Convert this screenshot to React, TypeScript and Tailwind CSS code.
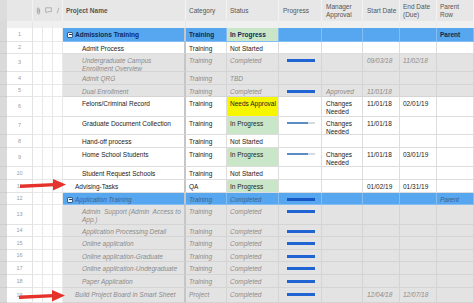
import React from 'react';

type Kind = 'parent' | 'parentDone' | 'normal' | 'done';

interface SheetRow {
    n: number;
    h: string;
    kind: Kind;
    level: 0 | 1 | 2;
    name: string[];
    cat: string;
    status: string;
    prog?: number;
    mgr?: string[];
    start?: string;
    end?: string;
    parent?: string;
}

const COLS = 'grid grid-cols-[7px_26px_10px_10px_10px_123px_41px_52px_43px_41px_37px_37px_37px]';

const rows: SheetRow[] = [
    { n: 1, h: 'h-[14px]', kind: 'parent', level: 0, name: ['Admissions Training'], cat: 'Training', status: 'In Progress', parent: 'Parent' },
    { n: 2, h: 'h-[12px]', kind: 'normal', level: 2, name: ['Admit Process'], cat: 'Training', status: 'Not Started' },
    { n: 3, h: 'h-[18px]', kind: 'done', level: 2, name: ['Undergraduate Campus', 'Enrollment Overview'], cat: 'Training', status: 'Completed', prog: 1, start: '09/03/18', end: '11/02/18' },
    { n: 4, h: 'h-[13px]', kind: 'done', level: 2, name: ['Admit QRG'], cat: 'Training', status: 'TBD' },
    { n: 5, h: 'h-[12px]', kind: 'done', level: 2, name: ['Dual Enrollment'], cat: 'Training', status: 'Completed', prog: 1, mgr: ['Approved'], start: '11/01/18' },
    { n: 6, h: 'h-[20px]', kind: 'normal', level: 2, name: ['Felons/Criminal Record'], cat: 'Training', status: 'Needs Approval', mgr: ['Changes', 'Needed'], start: '11/01/18', end: '02/01/19' },
    { n: 7, h: 'h-[18px]', kind: 'normal', level: 2, name: ['Graduate Document Collection'], cat: 'Training', status: 'In Progress', prog: 0.75, mgr: ['Changes', 'Needed'], start: '11/01/18' },
    { n: 8, h: 'h-[13px]', kind: 'normal', level: 2, name: ['Hand-off process'], cat: 'Training', status: 'Not Started' },
    { n: 9, h: 'h-[19px]', kind: 'normal', level: 2, name: ['Home School Students'], cat: 'Training', status: 'In Progress', prog: 0.75, mgr: ['Changes', 'Needed'], start: '11/01/18', end: '03/01/19' },
    { n: 10, h: 'h-[13px]', kind: 'normal', level: 2, name: ['Student Request Schools'], cat: 'Training', status: 'Not Started' },
    { n: 11, h: 'h-[13px]', kind: 'normal', level: 1, name: ['Advising-Tasks'], cat: 'QA', status: 'In Progress', start: '01/02/19', end: '01/31/19' },
    { n: 12, h: 'h-[12px]', kind: 'parentDone', level: 0, name: ['Application Training'], cat: 'Training', status: 'Completed', prog: 1, parent: 'Parent' },
    { n: 13, h: 'h-[20px]', kind: 'done', level: 2, name: ['Admin  Support (Admin  Access to', 'App.)'], cat: 'Training', status: 'Completed', prog: 1 },
    { n: 14, h: 'h-[12px]', kind: 'done', level: 2, name: ['Application Processing Detail'], cat: 'Training', status: 'Completed', prog: 1 },
    { n: 15, h: 'h-[13px]', kind: 'done', level: 2, name: ['Online application'], cat: 'Training', status: 'Completed', prog: 1 },
    { n: 16, h: 'h-[12px]', kind: 'done', level: 2, name: ['Online application-Graduate'], cat: 'Training', status: 'Completed', prog: 1 },
    { n: 17, h: 'h-[13px]', kind: 'done', level: 2, name: ['Online application-Undegraduate'], cat: 'Training', status: 'Completed', prog: 1 },
    { n: 18, h: 'h-[13px]', kind: 'done', level: 2, name: ['Paper Application'], cat: 'Training', status: 'Completed', prog: 1 },
    { n: 19, h: 'h-[15px]', kind: 'done', level: 1, name: ['Build Project Board in Smart Sheet'], cat: 'Project', status: 'Completed', prog: 1, start: '12/04/18', end: '12/07/18' },
];

const Lines: React.FC<{ lines?: string[] }> = ({ lines }) => (
    <>
        {(lines || []).map((l, i) => (
            <div key={i} className="whitespace-pre">{l}</div>
        ))}
    </>
);

const Progress: React.FC<{ value?: number; onBlue: boolean }> = ({ value, onBlue }) => {
    if (value === undefined) return null;
    if (value >= 1) {
        return <div className={`ml-[8px] mt-[2.5px] h-[3px] w-[28px] ${onBlue ? 'bg-[#1756c4]' : 'bg-[#1f64d2]'}`} />;
    }
    return (
        <div className="ml-[8px] mt-[2.5px] flex h-[2px] w-[28px] bg-[#d5dbe2]">
            <div className="h-full w-[75%] bg-[#5b8cc4]" />
        </div>
    );
};

const Row: React.FC<{ r: SheetRow }> = ({ r }) => {
    const blue = r.kind === 'parent' || r.kind === 'parentDone';
    const bg = blue ? 'bg-[#57a6f0]' : r.kind === 'done' ? 'bg-[#e3e3e3]' : 'bg-white';
    const line = blue ? 'border-[#84bdf3]' : r.kind === 'done' ? 'border-[#d4d4d4]' : 'border-[#dddddd]';
    const text =
        r.kind === 'parent'
            ? 'font-bold text-[#0e2b57]'
            : r.kind === 'parentDone'
            ? 'italic text-[#3d6391]'
            : r.kind === 'done'
            ? 'italic text-[#8b8b8b]'
            : 'text-[#222222]';
    const cell = `border-r border-b ${line} overflow-hidden pt-[2.5px] leading-[8px]`;
    const statusBg =
        r.status === 'In Progress' ? 'bg-[#c9e6c9]' : r.status === 'Needs Approval' ? 'bg-[#f6f600]' : '';
    const indent = r.level === 0 ? 'pl-[4px]' : r.level === 1 ? 'pl-[12px]' : 'pl-[19px]';

    return (
        <div className={`${COLS} ${r.h}`}>
            <div className="border-b border-[#cdcdcd] bg-[#dadada]" />
            <div className="flex items-center justify-center border-r border-b border-[#e3e3e3] bg-white text-[5.5px] text-[#9b9b9b]">
                {r.n}
            </div>
            <div className="border-r border-b border-[#e8e8e8] bg-white" />
            <div className="border-r border-b border-[#e8e8e8] bg-white" />
            <div className="border-r border-b border-[#e8e8e8] bg-white" />
            <div className={`${bg} ${text} border-b ${line} border-r-2 border-r-[#c6c6c6] overflow-hidden pt-[2.5px] leading-[8px] ${indent}`}>
                {r.level === 0 ? (
                    <div className="flex items-center gap-[2px]">
                        <span className="flex h-[6px] w-[6px] items-center justify-center rounded-[1px] border border-[#3a5f8c] bg-[#eef5fc]">
                            <span className="h-[1px] w-[3px] bg-[#1d3d66]" />
                        </span>
                        <span className="whitespace-pre">{r.name[0]}</span>
                    </div>
                ) : (
                    <Lines lines={r.name} />
                )}
            </div>
            <div className={`${bg} ${text} ${cell} pl-[3px]`}>{r.cat}</div>
            <div className={`${statusBg || bg} ${text} ${cell} pl-[3px]`}>{r.status}</div>
            <div className={`${bg} ${cell}`}>
                <Progress value={r.prog} onBlue={blue} />
            </div>
            <div className={`${bg} ${text} ${cell} pl-[4px]`}>
                <Lines lines={r.mgr} />
            </div>
            <div className={`${bg} ${text} ${cell} pl-[4px]`}>{r.start}</div>
            <div className={`${bg} ${text} ${cell} pl-[3px]`}>{r.end}</div>
            <div className={`${bg} ${text} ${cell} pl-[3px] ${r.kind === 'parent' ? 'font-bold' : ''}`}>{r.parent}</div>
        </div>
    );
};

const Header: React.FC = () => {
    const h = 'flex items-center border-r border-[#f3f3f3] pl-[3px] leading-[8px] text-[#555555]';
    return (
        <>
            <div className={`${COLS} h-[21px] bg-[#e7e7e7]`}>
                <div className="bg-[#dcdcdc]" />
                <div className="border-r border-[#f3f3f3]" />
                <div className="flex items-center justify-center">
                    <svg width="5" height="8" viewBox="0 0 5 8" fill="none" stroke="#a3a3a3" strokeWidth="0.9">
                        <path d="M3.6 2.2v3.6a1.1 1.1 0 0 1-2.2 0V1.6a0.75 0.75 0 0 1 1.5 0v3.8" />
                    </svg>
                </div>
                <div className="flex items-center justify-center">
                    <svg width="7" height="7" viewBox="0 0 7 7" fill="none" stroke="#a3a3a3" strokeWidth="0.8">
                        <path d="M0.6 0.8h5.8v3.9H2.6L1.2 6V4.7H0.6z" />
                    </svg>
                </div>
                <div className="flex items-center justify-center border-r border-[#f3f3f3]">
                    <svg width="4" height="7" viewBox="0 0 4 7" stroke="#a3a3a3" strokeWidth="0.8">
                        <path d="M3 0.8 1 6.2" />
                    </svg>
                </div>
                <div className={`${h} font-bold text-[#333333]`}>Project Name</div>
                <div className={h}>Category</div>
                <div className={h}>Status</div>
                <div className={`${h} pl-[4px]`}>Progress</div>
                <div className={`${h} pl-[4px]`}>
                    <div>
                        Manager
                        <br />
                        Approval
                    </div>
                </div>
                <div className={`${h} pl-[4px]`}>Start Date</div>
                <div className={h}>
                    <div>
                        End Date
                        <br />
                        (Due)
                    </div>
                </div>
                <div className={h}>
                    <div>
                        Parent
                        <br />
                        Row
                    </div>
                </div>
            </div>
            <div className={`${COLS} h-[7px] bg-[#f0f0f0]`}>
                <div className="bg-[#dadada]" />
                <div className="border-r border-[#e6e6e6]" />
                <div className="border-r border-[#ececec]" />
                <div className="border-r border-[#ececec]" />
                <div className="border-r border-[#ececec]" />
                <div className="border-r border-[#e6e6e6]" />
                <div className="border-r border-[#ececec]" />
                <div className="border-r border-[#ececec]" />
                <div className="border-r border-[#ececec]" />
                <div className="border-r border-[#ececec]" />
                <div className="border-r border-[#ececec]" />
                <div className="border-r border-[#ececec]" />
                <div />
            </div>
        </>
    );
};

const Arrow: React.FC<{ className: string }> = ({ className }) => (
    <svg className={`pointer-events-none absolute ${className}`} width="48" height="14" viewBox="0 0 48 14">
        <path d="M1 8.2 L35 6.6" stroke="#e5322b" strokeWidth="3.4" strokeLinecap="round" />
        <path d="M33 1 L46 6.6 L33 12.6 Z" fill="#e5322b" />
    </svg>
);

const App: React.FC = () => {
    return (
        <div className="relative h-[303px] w-[474px] overflow-hidden bg-white font-['Liberation_Sans','Arial',sans-serif] text-[6.5px]">
            <Header />
            {rows.map((r) => (
                <Row key={r.n} r={r} />
            ))}
            <Arrow className="left-[20px] top-[178px]" />
            <Arrow className="left-[19px] top-[289px]" />
        </div>
    );
};

export default App;
